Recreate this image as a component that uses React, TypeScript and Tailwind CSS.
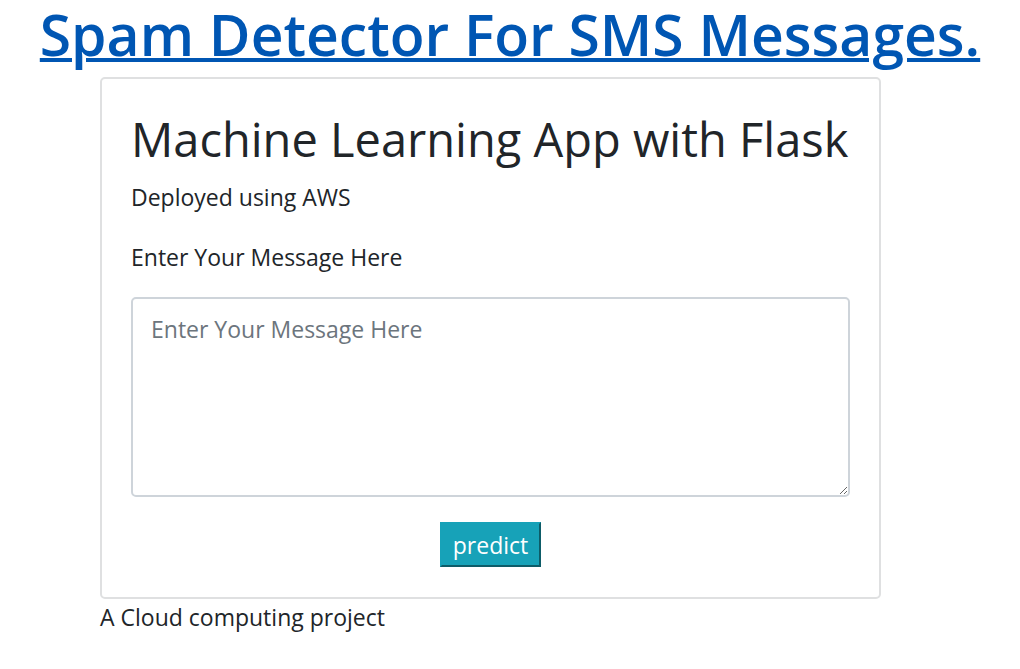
export default function App() {
  return (
    <div className="min-h-[669px] bg-white text-[#212529]" style={{ fontFamily: '"Open Sans", "Noto Sans", sans-serif' }}>
      <h1 className="text-center text-[57px] leading-[68px] font-semibold">
        <a href="#" className="text-[#0056b3] underline decoration-[4px] underline-offset-[2px]">
          Spam Detector For SMS Messages.
        </a>
      </h1>

      <div className="ml-[100px] mt-[9px] w-[781px] rounded-[5px] border-2 border-[#dfe0e1] px-[29px] pt-[30px] pb-[30px]">
        <h2 className="whitespace-nowrap text-[47px] leading-[60px] font-normal">Machine Learning App with Flask</h2>
        <p className="mt-[13px] text-[23px] leading-[30px]">Deployed using AWS</p>

        <label className="mt-[30px] block text-[23px] leading-[30px]">Enter Your Message Here</label>

        <textarea
          className="mt-[25px] block h-[200px] w-full resize-y rounded-[5px] border-2 border-[#ced4da] px-[18px] py-[15px] text-[23px] leading-[30px] text-[#495057] placeholder:text-[#6c757d] outline-none"
          placeholder="Enter Your Message Here"
        />

        <div className="mt-[25px] flex justify-center">
          <button className="h-[45px] border-2 border-t-[#17a2b8] border-l-[#17a2b8] border-r-[#0d5c68] border-b-[#0d5c68] bg-[#17a2b8] px-[11px] text-[23px] leading-[30px] text-white">
            predict
          </button>
        </div>
      </div>

      <p className="ml-[100px] mt-[3px] text-[23px] leading-[30px]">A Cloud computing project</p>
    </div>
  );
}
